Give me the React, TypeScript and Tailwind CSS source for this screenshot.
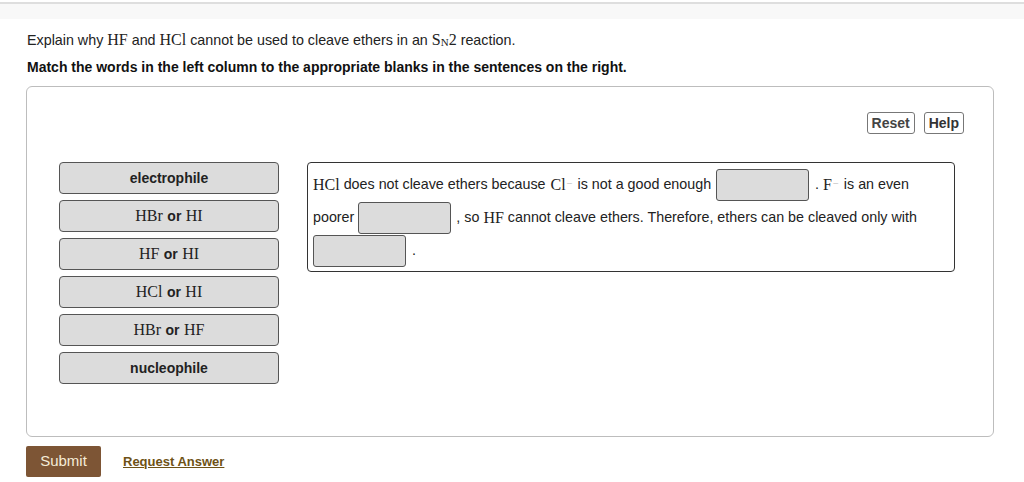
import React from "react";

const sans = "font-['Liberation_Sans',Arial,sans-serif]";
const serif = "font-['Liberation_Serif','Times_New_Roman',serif]";

function M({ children }: { children: React.ReactNode }) {
    // math-style text, rendered in a serif face like the original
    return <span className={`${serif} text-[16px]`}>{children}</span>;
}

function Minus() {
    return <sup className="relative -top-[1px] text-[10px] text-[#c8c8c8] ml-[1px] mr-[5px]">−</sup>;
}

function Blank() {
    return <span className="inline-block w-[93px] h-[32px] bg-[#dcdcdc] border border-[#555] rounded-[3px] align-middle" />;
}

const choices: { key: string; label: React.ReactNode }[] = [
    { key: "electrophile", label: <span className="font-bold text-[14px]">electrophile</span> },
    { key: "hbr-hi", label: <span><M>HBr</M> <span className="font-bold text-[14px]">or</span> <M>HI</M></span> },
    { key: "hf-hi", label: <span><M>HF</M> <span className="font-bold text-[14px]">or</span> <M>HI</M></span> },
    { key: "hcl-hi", label: <span><M>HCl</M> <span className="font-bold text-[14px]">or</span> <M>HI</M></span> },
    { key: "hbr-hf", label: <span><M>HBr</M> <span className="font-bold text-[14px]">or</span> <M>HF</M></span> },
    { key: "nucleophile", label: <span className="font-bold text-[14px]">nucleophile</span> },
];

export default function App() {
    return (
        <div className={`w-[1024px] h-[482px] bg-white text-[#222] ${sans} overflow-hidden`}>
            <div className="mt-[2px] h-[17px] border-t-2 border-[#dedede] bg-[#f8f8f8]" />

            <div className="px-[26px] pr-[30px]">
                <p className="mt-[11px] text-[14.3px] leading-[20px] text-[#222] pl-[1px]">
                    Explain why <M>HF</M> and <M>HCl</M> cannot be used to cleave ethers in an{" "}
                    <M>S<sub className="text-[11px] -bottom-[1px]">N</sub>2</M> reaction.
                </p>
                <p className="mt-[7px] text-[14px] leading-[20px] font-bold text-[#111] pl-[1px]">
                    Match the words in the left column to the appropriate blanks in the sentences on the right.
                </p>

                <div className="mt-[9px] h-[351px] border border-[#bdbdbd] rounded-[6px] pl-[32px] pr-[38px] pt-[25px]">
                    <div className="flex justify-end gap-[9px] -mr-[9px]">
                        <button className="h-[22px] px-[4px] border border-[#777] rounded-[3px] bg-white text-[14px] font-bold text-[#444] leading-none">
                            Reset
                        </button>
                        <button className="h-[22px] px-[4px] border border-[#777] rounded-[3px] bg-white text-[14px] font-bold text-[#333] leading-none">
                            Help
                        </button>
                    </div>

                    <div className="mt-[28px] flex items-start gap-[28px]">
                        <div className="w-[220px] flex flex-col gap-[6px]">
                            {choices.map((c) => (
                                <div
                                    key={c.key}
                                    className="h-[32px] flex items-center justify-center bg-[#dcdcdc] border border-[#555] rounded-[4px] text-[#222]"
                                >
                                    {c.label}
                                </div>
                            ))}
                        </div>

                        <div className="flex-1 border-[1.5px] border-[#333] rounded-[4px] pl-[5px] pt-[5px] pb-[4px] text-[14.3px] text-[#222]">
                            <div className="h-[33px] flex items-center whitespace-nowrap">
                                <M>HCl</M>
                                <span className="ml-[4px]">does not cleave ethers because</span>
                                <span className="ml-[5px]"><M>Cl</M></span>
                                <Minus />
                                <span>is not a good enough</span>
                                <span className="ml-[5px]"><Blank /></span>
                                <span className="ml-[6px]">.</span>
                                <span className="ml-[4px]"><M>F</M></span>
                                <Minus />
                                <span>is an even</span>
                            </div>
                            <div className="h-[33px] flex items-center whitespace-nowrap">
                                <span>poorer</span>
                                <span className="ml-[4px]"><Blank /></span>
                                <span className="ml-[5px]">, so</span>
                                <span className="ml-[4px]"><M>HF</M></span>
                                <span className="ml-[4px]">cannot cleave ethers. Therefore, ethers can be cleaved only with</span>
                            </div>
                            <div className="h-[33px] flex items-center">
                                <Blank />
                                <span className="ml-[6px]">.</span>
                            </div>
                        </div>
                    </div>
                </div>

                <div className="mt-[9px] flex items-center gap-[22px]">
                    <button className="w-[75px] h-[31px] bg-[#7d5535] rounded-[2px] text-[15px] text-[#f5ecd8]">
                        Submit
                    </button>
                    <a href="#" className="text-[13px] font-bold text-[#6e5216] underline">
                        Request Answer
                    </a>
                </div>
            </div>
        </div>
    );
}
